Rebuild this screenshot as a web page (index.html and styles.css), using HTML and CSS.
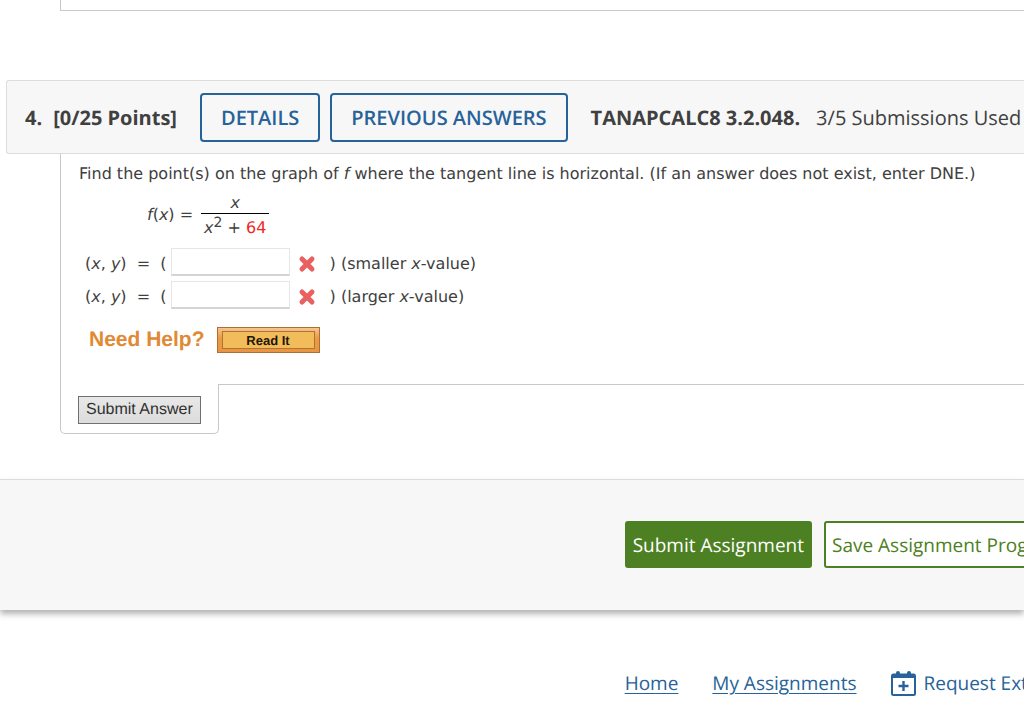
FILE: index.html
```
<!DOCTYPE html>
<html lang="en">
<head>
    <meta charset="UTF-8">
    <meta name="viewport" content="width=device-width, initial-scale=1.0">
    <title>Assignment</title>
    <link rel="stylesheet" href="styles.css">
</head>
<body>

    <div class="previous-question"></div>

    <main>
        <section class="question">
            <header class="question-header">
                <span class="question-number">4.</span>
                <span class="points">[0/25 Points]</span>
                <button type="button" class="header-btn">DETAILS</button>
                <button type="button" class="header-btn">PREVIOUS ANSWERS</button>
                <span class="question-code">TANAPCALC8 3.2.048.</span>
                <span class="submissions">3/5 Submissions Used</span>
            </header>

            <div class="question-body">
                <p class="prompt">Find the point(s) on the graph of <i>f</i> where the tangent line is horizontal. (If an answer does not exist, enter DNE.)</p>

                <div class="equation">
                    <span><i>f</i>(<i>x</i>) =</span>
                    <span class="fraction">
                        <span class="numerator"><i>x</i></span>
                        <span class="denominator"><i>x</i><sup>2</sup> + <span class="value">64</span></span>
                    </span>
                </div>

                <div class="answer-row">
                    <label for="smaller">(<i>x</i>, <i>y</i>) &nbsp;= &nbsp;(</label>
                    <input type="text" id="smaller">
                    <svg class="wrong" viewBox="0 0 18 18" role="img" aria-label="Incorrect">
                        <path d="M4 4L14 14M14 4L4 14"/>
                    </svg>
                    <span>) (smaller <i>x</i>-value)</span>
                </div>
                <div class="answer-row">
                    <label for="larger">(<i>x</i>, <i>y</i>) &nbsp;= &nbsp;(</label>
                    <input type="text" id="larger">
                    <svg class="wrong" viewBox="0 0 18 18" role="img" aria-label="Incorrect">
                        <path d="M4 4L14 14M14 4L4 14"/>
                    </svg>
                    <span>) (larger <i>x</i>-value)</span>
                </div>

                <div class="help">
                    <span class="help-title">Need Help?</span>
                    <button type="button" class="read-btn"><span>Read It</span></button>
                </div>
            </div>

            <div class="question-footer">
                <div class="submit-tab">
                    <button type="button" class="submit-answer">Submit Answer</button>
                </div>
                <div class="footer-line"></div>
            </div>
        </section>

        <div class="assignment-actions">
            <button type="button" class="action-btn primary">Submit Assignment</button>
            <button type="button" class="action-btn">Save Assignment Progress</button>
        </div>
    </main>

    <nav class="page-links">
        <a href="#">Home</a>
        <a href="#">My Assignments</a>
        <a href="#" class="extension">
            <svg class="calendar" viewBox="0 0 25 25" aria-hidden="true">
                <rect x="1" y="3.5" width="23" height="20.5" rx="1.5" fill="none" stroke="currentColor" stroke-width="2"/>
                <path d="M1 3h23v4H1z" fill="currentColor"/>
                <path d="M7 2v2M18 2v2" stroke="currentColor" stroke-width="4" stroke-linecap="round"/>
                <path d="M12.5 10v10M7.5 15h10" stroke="currentColor" stroke-width="2.4"/>
            </svg>
            <span>Request Extension</span>
        </a>
    </nav>

</body>
</html>
```
FILE: styles.css
```
:root {
    --blue: #27639a;
    --green: #4c8022;
    --text: #404040;
    --line: #c8c8c8;
    --panel: #f7f7f7;
}

* {
    box-sizing: border-box;
}

body {
    margin: 0;
    background: #fff;
    color: var(--text);
    font-family: "Open Sans", sans-serif;
    font-size: 19px;
    text-rendering: geometricPrecision;
    white-space: nowrap;
    overflow-x: hidden;
}

button {
    cursor: pointer;
    font-family: inherit;
    flex-shrink: 0;
    text-rendering: inherit;
}

.previous-question {
    height: 11px;
    margin-left: 60px;
    border-left: 1px solid var(--line);
    border-bottom: 1px solid var(--line);
}

.question {
    margin-top: 69px;
}

.question-header {
    display: flex;
    align-items: center;
    height: 74px;
    margin-left: 6px;
    padding-left: 18px;
    background: var(--panel);
    border: 1px solid #dcdcdc;
    border-right: none;
    border-radius: 3px 0 0 3px;
    font-size: 20px;
}

.question-number,
.points,
.question-code {
    font-weight: 700;
}

.points {
    margin: 0 23px 0 11px;
}

.header-btn {
    height: 49px;
    margin-right: 10px;
    padding: 0 19px;
    background: transparent;
    border: 2px solid var(--blue);
    border-radius: 4px;
    color: var(--blue);
    font-size: 20px;
    font-weight: 600;
}

.question-code {
    margin: 0 16px 0 13px;
}

.question-body {
    height: 230px;
    margin-left: 60px;
    padding: 8px 0 0 18px;
    border-left: 1px solid var(--line);
    font-family: Verdana, "DejaVu Sans", sans-serif;
    font-size: 16px;
    line-height: 24px;
}

.prompt {
    margin: 0;
}

.equation {
    display: flex;
    align-items: center;
    gap: 8px;
    height: 58px;
    margin-bottom: 2px;
    padding-left: 68px;
}

.fraction {
    display: flex;
    flex-direction: column;
    text-align: center;
    line-height: 20px;
}

.denominator {
    height: 24px;
    padding: 4px 3px 0;
    border-top: 1px solid #000;
}

.denominator sup {
    font-size: 14px;
    line-height: 0;
}

.value {
    color: #f0281e;
}

.answer-row {
    display: flex;
    align-items: center;
    height: 33px;
    padding: 3px 0 0 6px;
}

.answer-row input {
    width: 119px;
    height: 28px;
    margin: 0 8px 4px 4px;
    border: 1px solid #e6e6e6;
    border-bottom: 2px solid #d4d4d4;
    background: #fff;
    font: inherit;
}

.wrong {
    width: 18px;
    height: 18px;
    margin-right: 14px;
    fill: none;
    stroke: #e96060;
    stroke-width: 5;
    stroke-linecap: round;
}

.help {
    display: flex;
    align-items: center;
    gap: 12px;
    margin-top: 15px;
    padding-left: 10px;
    font-family: Arial, "Liberation Sans", sans-serif;
}

.help-title {
    color: #e08a35;
    font-size: 21px;
    font-weight: 700;
}

.read-btn {
    width: 103px;
    height: 26px;
    padding: 3px 4px;
    background: linear-gradient(#f8c48f, #ee9a45 40%, #ea943f);
    border: 1px solid #a96f34;
    color: #1d1606;
    font-size: 13px;
    font-weight: 700;
}

.read-btn span {
    display: block;
    height: 18px;
    border: 1px solid #a8763a;
    background: #f3bc5a;
    line-height: 17px;
}

.question-footer {
    display: flex;
    margin-left: 60px;
}

.submit-tab {
    height: 50px;
    padding: 12px 17px 0;
    border: 1px solid var(--line);
    border-top: none;
    border-radius: 0 0 5px 5px;
}

.submit-answer {
    display: block;
    height: 28px;
    padding: 0 7px;
    background: linear-gradient(#e8e8e8, #dcdcdc);
    border: 1px solid #707070;
    color: #303030;
    font-family: Arial, "Liberation Sans", sans-serif;
    font-size: 16px;
}

.footer-line {
    flex: 1;
    border-top: 1px solid var(--line);
}

.assignment-actions {
    display: flex;
    gap: 12px;
    margin-top: 45px;
    padding: 41px 0 42px 61%;
    background: var(--panel);
    border-top: 1px solid #dcdcdc;
    box-shadow: 0 4px 6px rgba(0, 0, 0, 0.3);
}

.action-btn {
    height: 47px;
    padding: 0 6px;
    background: #fff;
    border: 2px solid var(--green);
    border-radius: 3px;
    color: var(--green);
    font-size: 19px;
}

.action-btn.primary {
    background: var(--green);
    color: #fff;
}

.page-links {
    display: flex;
    align-items: center;
    gap: 34px;
    height: 38px;
    margin-top: 54px;
    padding-left: 61%;
    font-size: 19px;
}

.page-links a {
    color: var(--blue);
    text-underline-offset: 3px;
}

.page-links .extension {
    display: flex;
    align-items: center;
    gap: 8px;
    text-decoration: none;
}

.calendar {
    width: 25px;
    height: 25px;
}
```
